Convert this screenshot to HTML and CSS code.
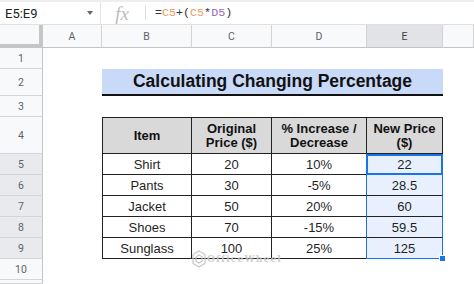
FILE: index.html
```html
<!DOCTYPE html>
<html lang="en">
<head>
  <meta charset="UTF-8">
  <title>Calculating Changing Percentage</title>
  <link rel="stylesheet" href="styles.css">
</head>
<body>
  <div class="fbar">
    <div class="namebox"><span>E5:E9</span><i class="caret"></i></div>
    <div class="fx">fx</div>
    <div class="fsep"></div>
    <div class="formula">=<span class="ref-c">C5</span>+(<span class="ref-c">C5</span>*<span class="ref-d">D5</span>)</div>
  </div>

  <div class="sheet">
    <!-- column headers -->
    <div class="corner"></div>
    <div class="ch">A</div>
    <div class="ch">B</div>
    <div class="ch">C</div>
    <div class="ch">D</div>
    <div class="ch sel">E</div>
    <div class="ch"></div>

    <!-- row 1 -->
    <div class="rh">1</div>
    <div class="blank span6"></div>

    <!-- row 2 -->
    <div class="rh">2</div>
    <div class="blank"></div>
    <div class="title">Calculating Changing Percentage</div>
    <div class="blank"></div>

    <!-- row 3 -->
    <div class="rh">3</div>
    <div class="blank span6"></div>

    <!-- row 4 -->
    <div class="rh">4</div>
    <div class="blank"></div>
    <div class="th first">Item</div>
    <div class="th">Original<br>Price ($)</div>
    <div class="th">% Increase /<br>Decrease</div>
    <div class="th">New Price<br>($)</div>
    <div class="blank"></div>

    <div class="rh sel">5</div>
    <div class="blank"></div>
    <div class="td first">Shirt</div><div class="td">20</div><div class="td">10%</div><div class="td e act">22</div>
    <div class="blank"></div>

    <div class="rh sel">6</div>
    <div class="blank"></div>
    <div class="td first">Pants</div><div class="td">30</div><div class="td">-5%</div><div class="td e">28.5</div>
    <div class="blank"></div>

    <div class="rh sel">7</div>
    <div class="blank"></div>
    <div class="td first">Jacket</div><div class="td">50</div><div class="td">20%</div><div class="td e">60</div>
    <div class="blank"></div>

    <div class="rh sel">8</div>
    <div class="blank"></div>
    <div class="td first">Shoes</div><div class="td">70</div><div class="td">-15%</div><div class="td e">59.5</div>
    <div class="blank"></div>

    <div class="rh sel">9</div>
    <div class="blank"></div>
    <div class="td first">Sunglass</div><div class="td">100</div><div class="td">25%</div><div class="td e last">125<i class="handle"></i></div>
    <div class="blank"></div>

    <div class="rh">10</div>
    <div class="blank span6"></div>

    <!-- row 11, only its top edge shows -->
    <div class="rh"></div>
    <div class="blank span6"></div>

    <div class="watermark">
      <svg width="14" height="18" viewBox="0 0 14 18"><path d="M7 1 L13 4.5 L13 13.5 L7 17 L1 13.5 L1 4.5 Z M7 5 L10 6.8 L10 11.2 L7 13 L4 11.2 L4 6.8 Z" fill="none" stroke="#c4c4c4" stroke-width="1.3"/></svg>
      <span>OfficeWheel</span>
    </div>
  </div>
</body>
</html>
```

FILE: styles.css
```css
*, *::before, *::after { box-sizing:border-box; margin:0; padding:0; }
html, body { width:100%; height:100%; overflow:hidden; background:#fff; font-family:Roboto,'Liberation Sans',sans-serif; }

/* formula bar */
.fbar {
  display:flex; align-items:center; height:25px;
  border-top:2px solid #eeeeee; border-bottom:1px solid #e0e0e0;
}
.namebox {
  width:101px; height:100%; display:flex; align-items:center; justify-content:space-between;
  padding:0 7px 0 5px; border-right:1px solid #e3e3e3;
  font-size:13px; color:#222;
}
.caret { border-left:3.5px solid transparent; border-right:3.5px solid transparent; border-top:4px solid #666; }
.fx {
  width:44px; text-align:center; padding-right:2px;
  font-family:'Liberation Serif',serif; font-style:italic; font-size:19px; color:#bcbcbc; line-height:1;
}
.fsep { width:1px; height:14px; background:#dadce0; }
.formula { padding-left:9px; font-family:'Liberation Mono',monospace; font-size:11.7px; color:#333; }
.ref-c { color:#ee9a5e; }
.ref-d { color:#8f6cb4; }

/* sheet grid */
.sheet {
  position:relative; display:grid;
  grid-template-columns:43px 59px 90px 80px 95px 76px 1fr;
  grid-template-rows:23px 21px 27px 21px 37px repeat(6, 21px) 1fr;
  height:259px;
  font-family:'Liberation Sans',Arial,sans-serif; font-size:13px; color:#1f1f1f;
}
.corner { background:#f8f9fa; border-right:4px solid #c4c7c5; border-bottom:4px solid #c4c7c5; }
.ch {
  background:#f8f9fa; border-right:1px solid #d3d3d3; border-bottom:1px solid #c4c4c4;
  display:flex; align-items:center; justify-content:center;
  font-family:Roboto,sans-serif; font-size:10.5px; color:#5f6368;
}
.ch.sel { background:#e1e3e6; color:#3c4043; }
.rh {
  background:#f8f9fa; border-right:1px solid #c4c4c4; border-bottom:1px solid #d6d6d6;
  display:flex; align-items:center; justify-content:center;
  font-family:Roboto,sans-serif; font-size:10.5px; color:#5f6368;
}
.rh.sel { background:#e8eaed; }
.span6 { grid-column:span 6; }

.title {
  grid-column:span 4; background:#c9daf8; border-bottom:2px solid #111;
  display:flex; align-items:center; justify-content:center;
  font-weight:700; font-size:17.5px; color:#111;
}

.th, .td {
  border-right:1px solid #222; border-bottom:1px solid #222;
  display:flex; align-items:center; justify-content:center; text-align:center;
}
.th { background:#d9d9d9; border-top:1px solid #222; font-weight:700; line-height:14px; color:#111; }
.first { border-left:1px solid #222; }

/* selected range E5:E9 */
.td.e {
  position:relative; margin-left:-1px;
  background:#e8f0fe; border-left:1px solid #1a73e8; border-right:1px solid #1a73e8;
}
.td.e.act { border:2px solid #1a73e8; }
.td.e.last { border-bottom:1px solid #1a73e8; }
.handle {
  position:absolute; right:-4px; bottom:-4px; width:7px; height:7px;
  background:#1a73e8; border:1px solid #fff;
}

.watermark {
  position:absolute; left:192px; top:225px; display:flex; align-items:center; gap:1px;
  font-family:'DejaVu Serif',serif; font-weight:700; font-size:9px; letter-spacing:1.2px; color:#c9c9c9;
  pointer-events:none; opacity:0.9;
}
```
